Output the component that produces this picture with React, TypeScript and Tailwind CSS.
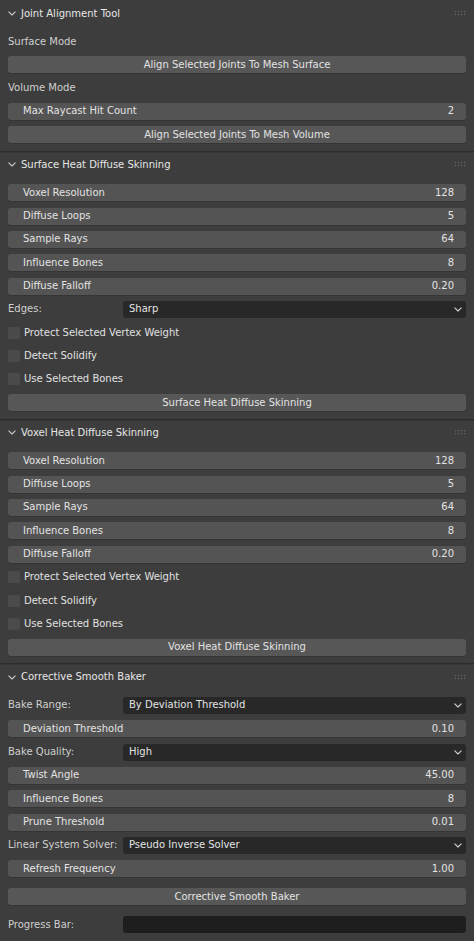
import type { ReactNode } from "react";

type Item =
  | { kind: "label"; text: string }
  | { kind: "button"; text: string; spaced?: boolean }
  | { kind: "number"; label: string; value: string }
  | { kind: "select"; label: string; value: string }
  | { kind: "check"; label: string }
  | { kind: "progress"; label: string; spaced?: boolean };

type Panel = { title: string; items: Item[] };

const skinningItems = (button: string, withEdges: boolean): Item[] => [
  { kind: "number", label: "Voxel Resolution", value: "128" },
  { kind: "number", label: "Diffuse Loops", value: "5" },
  { kind: "number", label: "Sample Rays", value: "64" },
  { kind: "number", label: "Influence Bones", value: "8" },
  { kind: "number", label: "Diffuse Falloff", value: "0.20" },
  ...(withEdges
    ? [{ kind: "select", label: "Edges:", value: "Sharp" } as Item]
    : []),
  { kind: "check", label: "Protect Selected Vertex Weight" },
  { kind: "check", label: "Detect Solidify" },
  { kind: "check", label: "Use Selected Bones" },
  { kind: "button", text: button },
];

const panels: Panel[] = [
  {
    title: "Joint Alignment Tool",
    items: [
      { kind: "label", text: "Surface Mode" },
      { kind: "button", text: "Align Selected Joints To Mesh Surface" },
      { kind: "label", text: "Volume Mode" },
      { kind: "number", label: "Max Raycast Hit Count", value: "2" },
      { kind: "button", text: "Align Selected Joints To Mesh Volume" },
    ],
  },
  {
    title: "Surface Heat Diffuse Skinning",
    items: skinningItems("Surface Heat Diffuse Skinning", true),
  },
  {
    title: "Voxel Heat Diffuse Skinning",
    items: skinningItems("Voxel Heat Diffuse Skinning", false),
  },
  {
    title: "Corrective Smooth Baker",
    items: [
      { kind: "select", label: "Bake Range:", value: "By Deviation Threshold" },
      { kind: "number", label: "Deviation Threshold", value: "0.10" },
      { kind: "select", label: "Bake Quality:", value: "High" },
      { kind: "number", label: "Twist Angle", value: "45.00" },
      { kind: "number", label: "Influence Bones", value: "8" },
      { kind: "number", label: "Prune Threshold", value: "0.01" },
      {
        kind: "select",
        label: "Linear System Solver:",
        value: "Pseudo Inverse Solver",
      },
      { kind: "number", label: "Refresh Frequency", value: "1.00" },
      { kind: "button", text: "Corrective Smooth Baker", spaced: true },
      { kind: "progress", label: "Progress Bar:", spaced: true },
    ],
  },
];

function Chevron({ className }: { className?: string }) {
  return (
    <svg
      viewBox="0 0 8 5"
      className={className}
      fill="none"
      stroke="currentColor"
      strokeWidth="1.1"
      strokeLinecap="round"
      strokeLinejoin="round"
      aria-hidden
    >
      <polyline points="0.8,0.8 4,4 7.2,0.8" />
    </svg>
  );
}

function Grip() {
  const dots = [];
  for (let r = 0; r < 2; r++) {
    for (let c = 0; c < 4; c++) {
      dots.push(<rect key={`${r}-${c}`} x={c * 3} y={r * 3} width="1.2" height="1.2" />);
    }
  }
  return (
    <svg viewBox="0 0 11 5" className="h-[5px] w-[11px] fill-[#6a6a6a]" aria-hidden>
      {dots}
    </svg>
  );
}

function Row({ children, spaced }: { children: ReactNode; spaced?: boolean }) {
  return (
    <div className={`flex h-[17px] items-center ${spaced ? "mt-[4.67px]" : ""}`}>
      {children}
    </div>
  );
}

function renderItem(item: Item, i: number) {
  switch (item.kind) {
    case "label":
      return (
        <Row key={i}>
          <span className="text-[#cfcfcf]">{item.text}</span>
        </Row>
      );
    case "button":
      return (
        <Row key={i} spaced={item.spaced}>
          <div className="flex h-full w-full items-center justify-center rounded-[3px] bg-[#575757] text-[#e3e3e3] shadow-[0_1px_0_#353535]">
            {item.text}
          </div>
        </Row>
      );
    case "number":
      return (
        <Row key={i}>
          <div className="flex h-full w-full items-center justify-between rounded-[3px] bg-[#545454] pl-[15px] pr-[12px] text-[#e3e3e3] shadow-[0_1px_0_#353535]">
            <span>{item.label}</span>
            <span>{item.value}</span>
          </div>
        </Row>
      );
    case "select":
      return (
        <Row key={i}>
          <span className="w-[115px] shrink-0 text-[#cfcfcf]">{item.label}</span>
          <div className="flex h-full flex-1 items-center justify-between rounded-[3px] bg-[#282828] pl-[6px] pr-[4px] text-[#e3e3e3]">
            <span>{item.value}</span>
            <Chevron className="h-[5px] w-[8px] text-[#d0d0d0]" />
          </div>
        </Row>
      );
    case "check":
      return (
        <Row key={i}>
          <div className="h-[12px] w-[12px] shrink-0 rounded-[2px] bg-[#4b4b4b]" />
          <span className="ml-[4px] text-[#e0e0e0]">{item.label}</span>
        </Row>
      );
    case "progress":
      return (
        <Row key={i} spaced={item.spaced}>
          <span className="w-[115px] shrink-0 text-[#cfcfcf]">{item.label}</span>
          <div className="h-full flex-1 rounded-[3px] bg-[#1e1e1e]" />
        </Row>
      );
  }
}

function PanelView({ panel, last }: { panel: Panel; last: boolean }) {
  return (
    <section className="flex flex-col">
      <div className="flex h-[24px] items-center px-2">
        <Chevron className="h-[5px] w-[8px] text-[#c8c8c8]" />
        <span className="ml-[5px] flex-1 text-[#e6e6e6]">{panel.title}</span>
        <Grip />
      </div>
      <div className="flex flex-col gap-[6.33px] px-2 pt-[7.5px] pb-[7.5px]">
        {panel.items.map(renderItem)}
      </div>
      {!last && (
        <>
          <div className="h-px bg-[#2c2c2c]" />
          <div className="h-px bg-[#353535]" />
        </>
      )}
    </section>
  );
}

export default function App() {
  return (
    <div
      className="h-[941px] w-[474px] overflow-hidden bg-[#3d3d3d] pt-[1.5px] text-[10px] leading-none"
      style={{ fontFamily: '"DejaVu Sans", "Liberation Sans", sans-serif' }}
    >
      {panels.map((panel, i) => (
        <PanelView key={panel.title} panel={panel} last={i === panels.length - 1} />
      ))}
    </div>
  );
}
